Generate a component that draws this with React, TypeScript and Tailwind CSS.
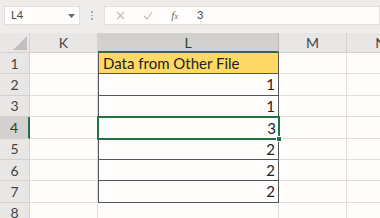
import { Fragment } from 'react'

const cols = ['K', 'L', 'M', 'N']
const values = ['Data from Other File', '1', '1', '3', '2', '2', '2', '']

export default function App() {
  return (
    <div className="w-[380px] h-[218px] overflow-hidden bg-[#fffdfc] font-['Lato','Liberation_Sans',sans-serif] text-[#333]">
      {/* Formula bar */}
      <div className="h-[33px] bg-[#efedec] flex items-start pt-[6px] pl-[4px] gap-0">
        <div className="w-[76px] h-[19px] bg-[#fffdfc] border border-[#e2e0df] flex items-center justify-between pl-[6px] pr-[4px]">
          <span className="text-[11px] text-[#444]">L4</span>
          <svg width="7" height="4" viewBox="0 0 7 4"><path d="M0 0h7L3.5 4z" fill="#666" /></svg>
        </div>
        <div className="w-[24px] h-[19px] flex flex-col items-center justify-center gap-[2px]">
          <span className="w-[1.5px] h-[1.5px] bg-[#aaa]" />
          <span className="w-[1.5px] h-[1.5px] bg-[#aaa]" />
          <span className="w-[1.5px] h-[1.5px] bg-[#aaa]" />
        </div>
        <div className="flex-1 h-[19px] bg-[#fffdfc] border border-[#e2e0df] flex items-center">
          <div className="w-[82px] flex items-center justify-around pl-[2px]">
            <svg width="9" height="9" viewBox="0 0 9 9"><path d="M1 1l7 7M8 1l-7 7" stroke="#bdbbba" strokeWidth="1.1" /></svg>
            <svg width="10" height="9" viewBox="0 0 10 9"><path d="M1 5l3 3 5-7" stroke="#bdbbba" strokeWidth="1.1" fill="none" /></svg>
            <span className="text-[11px] italic font-['Liberation_Serif',serif] text-[#666]">f<span className="text-[8px]">x</span></span>
          </div>
          <span className="ml-[10px] text-[11px] text-[#444]">3</span>
        </div>
      </div>

      {/* Grid */}
      <div className="grid grid-cols-[30px_68px_181px_68px_68px] grid-rows-[20px_repeat(8,21.4px)]">
        {/* header row */}
        <div className="bg-[#e9e7e6] border-r border-b border-[#d4d2d1] flex items-end justify-end p-[2px]">
          <svg width="14" height="14" viewBox="0 0 14 14"><path d="M14 0v14H0z" fill="#c2c0bf" /></svg>
        </div>
        {cols.map((c) => (
          <div
            key={c}
            className={
              c === 'L'
                ? 'bg-[#d3d1d0] border-r border-[#bdbbba] border-b-2 border-b-[#217346] flex items-center justify-center text-[14px] text-[#1e4620]'
                : 'bg-[#e9e7e6] border-r border-b border-[#d4d2d1] flex items-center justify-center text-[14px] text-[#444]'
            }
          >
            {c}
          </div>
        ))}

        {values.map((v, i) => {
          const row = i + 1
          const sel = row === 4
          const inData = row <= 7
          return (
            <Fragment key={row}>
              <div
                className={
                  sel
                    ? 'bg-[#d3d1d0] border-b border-[#d4d2d1] border-r-2 border-r-[#217346] flex items-center justify-center text-[14px] text-[#1e4620]'
                    : 'bg-[#e9e7e6] border-r border-b border-[#d4d2d1] flex items-center justify-center text-[14px] text-[#444]'
                }
              >
                {row}
              </div>
              <div className="border-r border-b border-[#e1dfde]" />
              <div
                className={
                  sel
                    ? 'relative border-2 border-[#217346] -m-[1px] flex items-center justify-end pr-[2px] text-[15px] text-[#222] z-10'
                    : inData
                      ? `border border-[#555] -mt-[1px] flex items-center text-[15px] text-[#222] ${row === 1 ? 'bg-[#ffd966] justify-start pl-[4px]' : 'justify-end pr-[3px]'}`
                      : 'border-r border-b border-[#e1dfde]'
                }
              >
                {v}
                {sel && (
                  <span className="absolute -right-[4px] -bottom-[4px] w-[6px] h-[6px] bg-[#217346] border border-white" />
                )}
              </div>
              <div className="border-r border-b border-[#e1dfde]" />
              <div className="border-r border-b border-[#e1dfde]" />
            </Fragment>
          )
        })}
      </div>
    </div>
  )
}
